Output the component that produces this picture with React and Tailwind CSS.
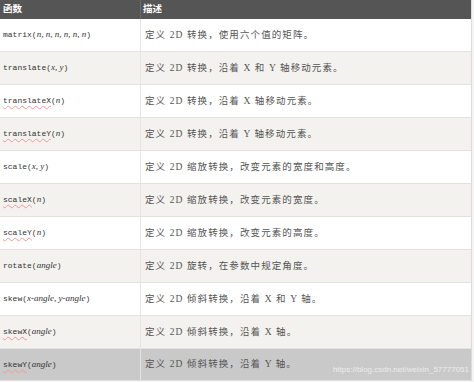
const rows = [
  { name: 'matrix', args: 'n, n, n, n, n, n', desc: '定义 2D 转换，使用六个值的矩阵。' },
  { name: 'translate', args: 'x, y', desc: '定义 2D 转换，沿着 X 和 Y 轴移动元素。' },
  { name: 'translateX', args: 'n', desc: '定义 2D 转换，沿着 X 轴移动元素。', typo: true },
  { name: 'translateY', args: 'n', desc: '定义 2D 转换，沿着 Y 轴移动元素。', typo: true },
  { name: 'scale', args: 'x, y', desc: '定义 2D 缩放转换，改变元素的宽度和高度。' },
  { name: 'scaleX', args: 'n', desc: '定义 2D 缩放转换，改变元素的宽度。', typo: true },
  { name: 'scaleY', args: 'n', desc: '定义 2D 缩放转换，改变元素的高度。', typo: true },
  { name: 'rotate', args: 'angle', desc: '定义 2D 旋转，在参数中规定角度。' },
  { name: 'skew', args: 'x-angle, y-angle', desc: '定义 2D 倾斜转换，沿着 X 和 Y 轴。' },
  { name: 'skewX', args: 'angle', desc: '定义 2D 倾斜转换，沿着 X 轴。', typo: true },
  { name: 'skewY', args: 'angle', desc: '定义 2D 倾斜转换，沿着 Y 轴。', typo: true },
];

const mono = "font-['Liberation_Mono',monospace]";
const serif = "font-['Liberation_Serif','Noto_Sans_CJK_SC',serif]";

function Row({ row, i, last }) {
  let bg = i % 2 === 1 ? 'bg-[#f3f2ee]' : 'bg-white';
  if (last) bg = 'bg-[#c9c9c9]';
  return (
    <div className={`flex ${last ? 'h-[32px]' : 'h-[33px]'} border-b border-[#e2e2e2] ${bg}`}>
      <div className={`w-[141px] shrink-0 flex items-center pl-[3px] border-r border-[#e4e4e4] text-[8px] text-[#333] ${mono}`}>
        <span className={row.typo ? 'underline decoration-wavy decoration-[#ef9a9a] decoration-1 underline-offset-2' : ''}>
          {row.name}
        </span>
        <span>(</span>
        <span className="font-['Liberation_Serif',serif] italic text-[9px]">{row.args}</span>
        <span>)</span>
      </div>
      <div className={`flex-1 flex items-center pl-[4px] text-[9.5px] text-[#555] tracking-[1.1px] ${serif}`}>
        {row.desc}
      </div>
    </div>
  );
}

export default function App() {
  return (
    <div className="relative w-[474px] h-[382px] overflow-hidden bg-[#f4f4f4]">
      <div className="w-[472px] border-r border-[#dcdcdc]">
        <div className={`flex h-[19px] bg-[#555555] text-white font-bold text-[9.5px] ${serif}`}>
          <div className="w-[141px] shrink-0 flex items-center pl-[3px] border-r border-[#6a6a6a]">函数</div>
          <div className="flex-1 flex items-center pl-[2px]">描述</div>
        </div>
        {rows.map((row, i) => (
          <Row key={row.name} row={row} i={i} last={i === rows.length - 1} />
        ))}
      </div>
      <div className="absolute right-[5px] top-[364px] text-[8px] text-[#ececec] font-['Liberation_Sans',sans-serif]">
        https://blog.csdn.net/weixin_57777051
      </div>
    </div>
  );
}
